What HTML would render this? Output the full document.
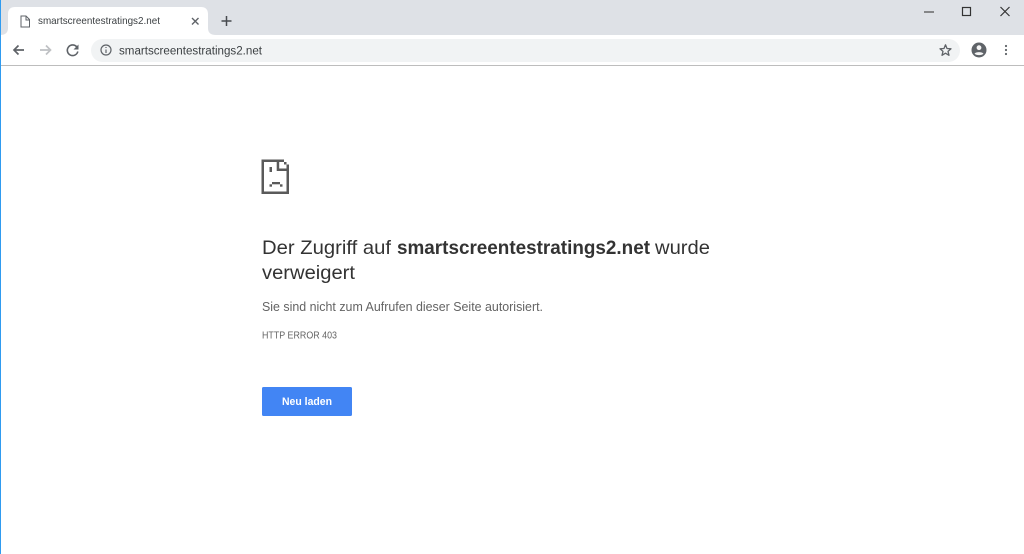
<!DOCTYPE html>
<html><head><meta charset="utf-8"><title>smartscreentestratings2.net</title>
<style>
html,body{margin:0;padding:0;background:#fff;width:1024px;height:554px;overflow:hidden}
svg{display:block}
text{font-family:"Liberation Sans",sans-serif}
</style></head><body>
<svg width="1024" height="554" viewBox="0 0 1024 554" xmlns="http://www.w3.org/2000/svg">
<rect width="1024" height="554" fill="#fff"/>
<rect width="1024" height="35" fill="#dee1e6"/>
<path d="M0 35H1024V65H0Z" fill="#fff"/>
<path d="M0 35C5 35 8 33 8 28V14C8 9 11 7 15 7H201C205 7 208 9 208 14V28C208 33 211 35 216 35Z" fill="#fff"/>
<rect x="0" y="65" width="1024" height="1" fill="#bdbdbd"/>
<rect x="0" y="0" width="1" height="554" fill="#2f9bf0"/>
<path d="M21 16H26L29.500 19.500V27H21Z" fill="#fff" stroke="#5f6368" stroke-width="1"/>
<path d="M26 16V20H29.500" fill="none" stroke="#5f6368" stroke-width="1"/>
<text x="38" y="24" font-size="10.500" fill="#3c4043" textLength="122" lengthAdjust="spacingAndGlyphs">smartscreentestratings2.net</text>
<path d="M192 18L198.500 24.500M198.500 18L192 24.500" stroke="#5f6368" stroke-width="1.400"/>
<path d="M226.500 16V26M221.500 21H231.500" stroke="#474a4f" stroke-width="1.500"/>
<path d="M924 12H934" stroke="#555" stroke-width="1.300"/>
<rect x="962.500" y="7.500" width="8" height="8" fill="none" stroke="#333" stroke-width="1.200"/>
<path d="M1000.500 7L1009.500 16M1009.500 7L1000.500 16" stroke="#333" stroke-width="1.200"/>
<path d="M24 50H14M18.500 45.500L14 50L18.500 54.500" fill="none" stroke="#5f6368" stroke-width="1.700"/>
<path d="M40 50H50.500M46 45.500L50.500 50L46 54.500" fill="none" stroke="#bfc1c4" stroke-width="1.700"/>
<path d="M76.800 47A5.300 5.300 0 1 0 77.800 51.500" fill="none" stroke="#5f6368" stroke-width="1.600"/>
<path d="M78.500 44.500V49.500H73.500Z" fill="#5f6368"/>
<rect x="91" y="39" width="869" height="23" rx="11.500" fill="#f1f3f4"/>
<circle cx="106" cy="50" r="5" fill="none" stroke="#5f6368" stroke-width="1.200"/>
<path d="M106 49.500V53M106 47V48" stroke="#5f6368" stroke-width="1.200"/>
<text x="119" y="54.500" font-size="11.500" fill="#3c4043" textLength="143" lengthAdjust="spacingAndGlyphs">smartscreentestratings2.net</text>
<path d="M945.500 44.800L947 48.500L951 48.800L948 51.400L949 55.300L945.500 53.200L942 55.300L943 51.400L940 48.800L944 48.500Z" fill="none" stroke="#5f6368" stroke-width="1.300" stroke-linejoin="round"/>
<circle cx="979" cy="50" r="7.500" fill="#5f6368"/>
<circle cx="979" cy="47.700" r="2.400" fill="#f5f5f5"/>
<path d="M974.500 53.600C975.800 51.600 982.200 51.600 983.500 53.600C982 55.600 976 55.600 974.500 53.600Z" fill="#f5f5f5"/>
<circle cx="1006" cy="46" r="1.100" fill="#5f6368"/><circle cx="1006" cy="50" r="1.100" fill="#5f6368"/><circle cx="1006" cy="54" r="1.100" fill="#5f6368"/>
<g fill="#5a5a5a">
<path d="M261.500 159.500H284V162H264V191.500H286.500V168H289V194H261.500Z"/>
<path d="M276.700 159.500H279.200V168.500H289V171H276.700Z"/>
<rect x="284" y="162" width="2.500" height="2.500"/><rect x="286.500" y="164.500" width="2.500" height="3.500"/>
<rect x="269.500" y="167" width="2.500" height="5"/>
<rect x="272" y="182" width="8" height="2.300"/><rect x="269.500" y="184.300" width="2.500" height="2.400"/><rect x="280" y="184.300" width="2.500" height="2.400"/>
</g>
<text x="262" y="254" font-size="19.500" fill="#333" textLength="129" lengthAdjust="spacingAndGlyphs">Der Zugriff auf</text>
<text x="397" y="254" font-size="19.500" font-weight="700" fill="#333" textLength="253" lengthAdjust="spacingAndGlyphs">smartscreentestratings2.net</text>
<text x="655" y="254" font-size="19.500" fill="#333" textLength="55" lengthAdjust="spacingAndGlyphs">wurde</text>
<text x="262" y="279" font-size="19.500" fill="#333" textLength="93" lengthAdjust="spacingAndGlyphs">verweigert</text>
<text x="262" y="311" font-size="12.500" fill="#646464" textLength="281" lengthAdjust="spacingAndGlyphs">Sie sind nicht zum Aufrufen dieser Seite autorisiert.</text>
<text x="262" y="338.500" font-size="10" fill="#646464" textLength="75" lengthAdjust="spacingAndGlyphs">HTTP ERROR 403</text>
<rect x="262" y="387" width="90" height="29" rx="1.500" fill="#4285f4"/>
<text x="282" y="405" font-size="11" font-weight="700" fill="#fff" textLength="50" lengthAdjust="spacingAndGlyphs">Neu laden</text>
</svg>
</body></html>
